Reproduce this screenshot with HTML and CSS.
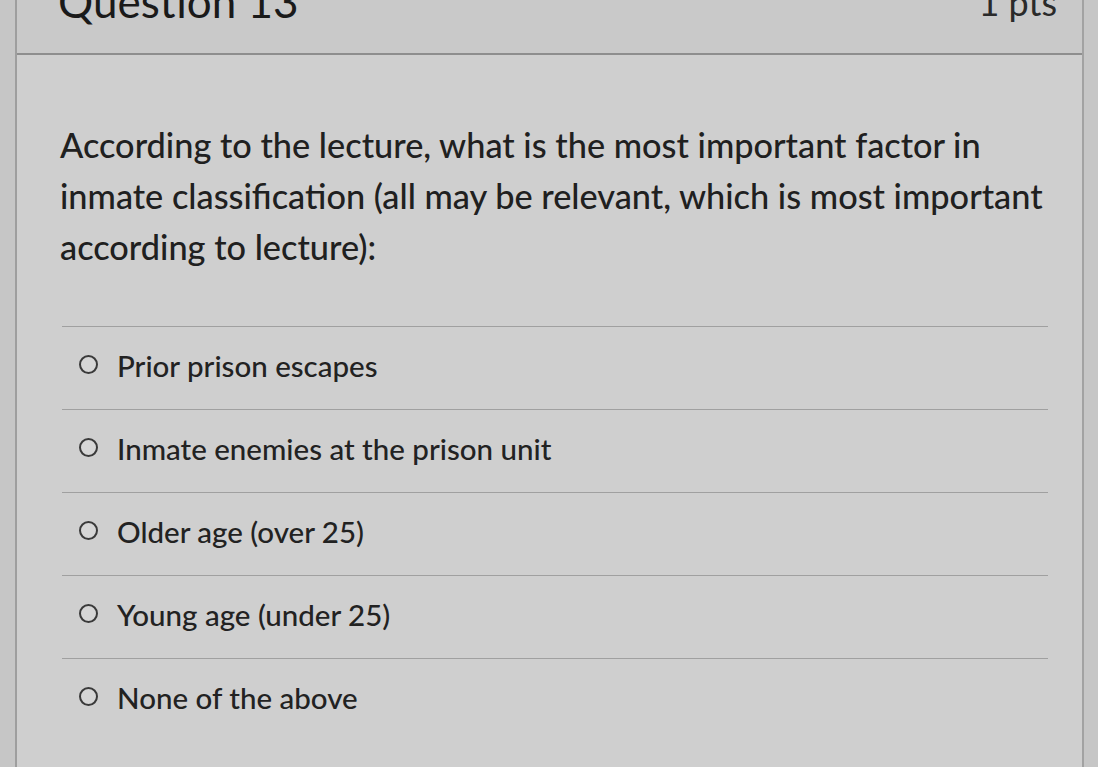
FILE: index.html
```html
<!DOCTYPE html>
<html lang="en">
<head>
<meta charset="utf-8">
<title>Question 13</title>
<link rel="stylesheet" href="styles.css">
</head>
<body>
<div class="card">
  <div class="card-header">
    <span class="q-title">Question 13</span>
    <span class="q-pts">1 pts</span>
  </div>
  <div class="card-body">
    <p class="q-text">According to the lecture, what is the most important factor in<br>inmate classification (all may be relevant, which is most important<br>according to lecture):</p>
    <ul class="answers">
      <li class="answer"><span class="radio"></span><span class="label">Prior prison escapes</span></li>
      <li class="answer"><span class="radio"></span><span class="label">Inmate enemies at the prison unit</span></li>
      <li class="answer"><span class="radio"></span><span class="label">Older age (over 25)</span></li>
      <li class="answer"><span class="radio"></span><span class="label">Young age (under 25)</span></li>
      <li class="answer"><span class="radio"></span><span class="label">None of the above</span></li>
    </ul>
  </div>
</div>
</body>
</html>
```
FILE: styles.css
```css
html, body {
  margin: 0;
  padding: 0;
  height: 100%;
  overflow: hidden;
}
body {
  background: #c6c6c6;
  font-family: Lato, "Noto Sans", sans-serif;
  color: #222;
}
.card {
  margin: 0 14px 0 15px;
  min-height: 100%;
  background: #cfcfcf;
  border-left: 2px solid #9e9e9e;
  border-right: 2px solid #a2a2a2;
  box-sizing: border-box;
}
.card-header {
  height: 53px;
  background: #c9c9c9;
  border-bottom: 2px solid #8e8e8e;
  display: flex;
  justify-content: space-between;
  align-items: flex-start;
  padding: 0 25px 0 41px;
  overflow: hidden;
}
.q-title {
  font-size: 44px;
  line-height: 44px;
  margin-top: -21px;
  color: #1a1a1a;
}
.q-pts {
  font-size: 36px;
  line-height: 36px;
  margin-top: -16px;
  color: #2a2a2a;
}
.card-body {
  padding: 64px 30px 0 43px;
}
.q-text {
  margin: 0;
  font-size: 34.3px;
  line-height: 51px;
  font-weight: 500;
  color: #202020;
}
.answers {
  list-style: none;
  margin: 54px 0 0 2px;
  padding: 0;
}
.answer {
  border-top: 1px solid #a0a0a0;
  height: 82px;
  box-sizing: content-box;
  display: flex;
  align-items: flex-start;
  padding: 0 0 0 17px;
  margin-right: 4px;
}
.radio {
  width: 15px;
  height: 15px;
  border: 2.5px solid #3a3a3a;
  border-radius: 50%;
  background: #d6d6d6;
  margin-top: 28px;
  flex: none;
}
.label {
  margin-left: 19px;
  margin-top: 24px;
  font-size: 29.5px;
  line-height: 30px;
  font-weight: 500;
  color: #222;
}
```
